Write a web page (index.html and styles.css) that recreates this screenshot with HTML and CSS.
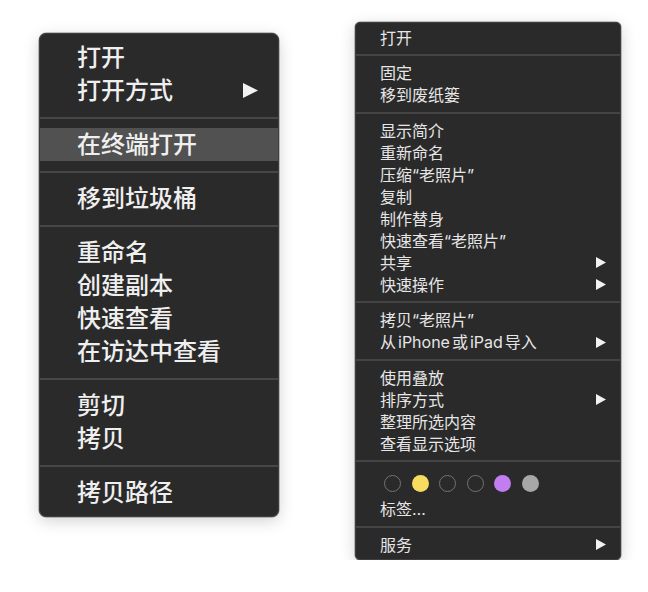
FILE: index.html
```html
<!DOCTYPE html>
<html lang="zh-CN">
<head>
<meta charset="utf-8">
<title>菜单</title>
<link rel="stylesheet" href="styles.css">
</head>
<body>
<div class="stage">
  <div class="menu menu-lg">
    <div class="item">打开</div>
    <div class="item"><span>打开方式</span><svg class="arrow" viewBox="0 0 15 15"><polygon points="0,0 15,7.5 0,15"/></svg></div>
    <div class="sep"></div>
    <div class="item hl">在终端打开</div>
    <div class="sep"></div>
    <div class="item">移到垃圾桶</div>
    <div class="sep"></div>
    <div class="item">重命名</div>
    <div class="item">创建副本</div>
    <div class="item">快速查看</div>
    <div class="item">在访达中查看</div>
    <div class="sep"></div>
    <div class="item">剪切</div>
    <div class="item">拷贝</div>
    <div class="sep"></div>
    <div class="item">拷贝路径</div>
  </div>

  <div class="menu menu-sm">
    <div class="item">打开</div>
    <div class="sep"></div>
    <div class="item">固定</div>
    <div class="item">移到废纸篓</div>
    <div class="sep"></div>
    <div class="item">显示简介</div>
    <div class="item">重新命名</div>
    <div class="item">压缩“老照片”</div>
    <div class="item">复制</div>
    <div class="item">制作替身</div>
    <div class="item">快速查看“老照片”</div>
    <div class="item"><span>共享</span><svg class="arrow" viewBox="0 0 10 11"><polygon points="0,0 10,5.5 0,11"/></svg></div>
    <div class="item"><span>快速操作</span><svg class="arrow" viewBox="0 0 10 11"><polygon points="0,0 10,5.5 0,11"/></svg></div>
    <div class="sep"></div>
    <div class="item">拷贝“老照片”</div>
    <div class="item"><span>从 iPhone 或 iPad 导入</span><svg class="arrow" viewBox="0 0 10 11"><polygon points="0,0 10,5.5 0,11"/></svg></div>
    <div class="sep"></div>
    <div class="item">使用叠放</div>
    <div class="item"><span>排序方式</span><svg class="arrow" viewBox="0 0 10 11"><polygon points="0,0 10,5.5 0,11"/></svg></div>
    <div class="item">整理所选内容</div>
    <div class="item">查看显示选项</div>
    <div class="sep"></div>
    <div class="tags">
      <span class="tag empty"></span>
      <span class="tag yellow"></span>
      <span class="tag empty"></span>
      <span class="tag empty"></span>
      <span class="tag purple"></span>
      <span class="tag gray"></span>
    </div>
    <div class="item">标签…</div>
    <div class="sep"></div>
    <div class="item"><span>服务</span><svg class="arrow" viewBox="0 0 10 11"><polygon points="0,0 10,5.5 0,11"/></svg></div>
  </div>
</div>
</body>
</html>
```
FILE: styles.css
```css
* { box-sizing: border-box; }
html, body { margin: 0; padding: 0; background: #ffffff; }
body {
  font-family: Inter, "Noto Sans CJK SC", sans-serif;
  color: #efefef;
}
.stage {
  display: flex;
  align-items: flex-start;
  padding-left: 39px;
  gap: 76px;
}
.menu {
  background: #2a2a2a;
  border: 1px solid #3e3e3e;
  box-shadow: 0 0 0 0.5px rgba(0,0,0,0.45), 0 4px 16px rgba(0,0,0,0.18);
  display: flex;
  flex-direction: column;
}
.item {
  display: flex;
  align-items: center;
  justify-content: space-between;
  white-space: nowrap;
}
.arrow { fill: #f2f2f2; flex: none; }
.sep { display: flex; align-items: center; }
.sep::before { content: ""; display: block; width: 100%; height: 2px; background: #474747; }

/* large menu */
.menu-lg {
  width: 240px;
  margin-top: 33px;
  padding: 7px 0;
  border-radius: 7px;
}
.menu-lg .item {
  height: 33px;
  font-size: 24px;
  font-weight: 500;
  line-height: 33px;
  padding: 0 20px 0 37px;
}
.menu-lg .item.hl { background: #515151; }
.menu-lg .sep { height: 21px; }
.menu-lg .arrow { width: 15px; height: 15px; }

/* small menu */
.menu-sm {
  width: 266px;
  margin-top: 22px;
  padding: 3.5px 0 3px;
  border-radius: 5px;
  color: #e6e6e6;
}
.menu-sm .item {
  height: 22px;
  font-size: 16px;
  line-height: 22px;
  padding: 0 14px 0 24px;
}
.menu-sm .item span { word-spacing: -2.5px; }
.menu-sm .sep { height: 13.5px; }
.menu-sm .sep::before { background: #444444; }
.menu-sm .arrow { width: 10px; height: 11px; }
.tags {
  height: 30px;
  display: flex;
  align-items: center;
  gap: 10.6px;
  padding-left: 28px;
}
.tag {
  width: 17px;
  height: 17px;
  border-radius: 50%;
  flex: none;
}
.tag.empty { border: 1.5px solid #737373; }
.tag.yellow { background: #f7dc60; }
.tag.purple { background: #c27df0; }
.tag.gray { background: #a7a7a7; }
```
